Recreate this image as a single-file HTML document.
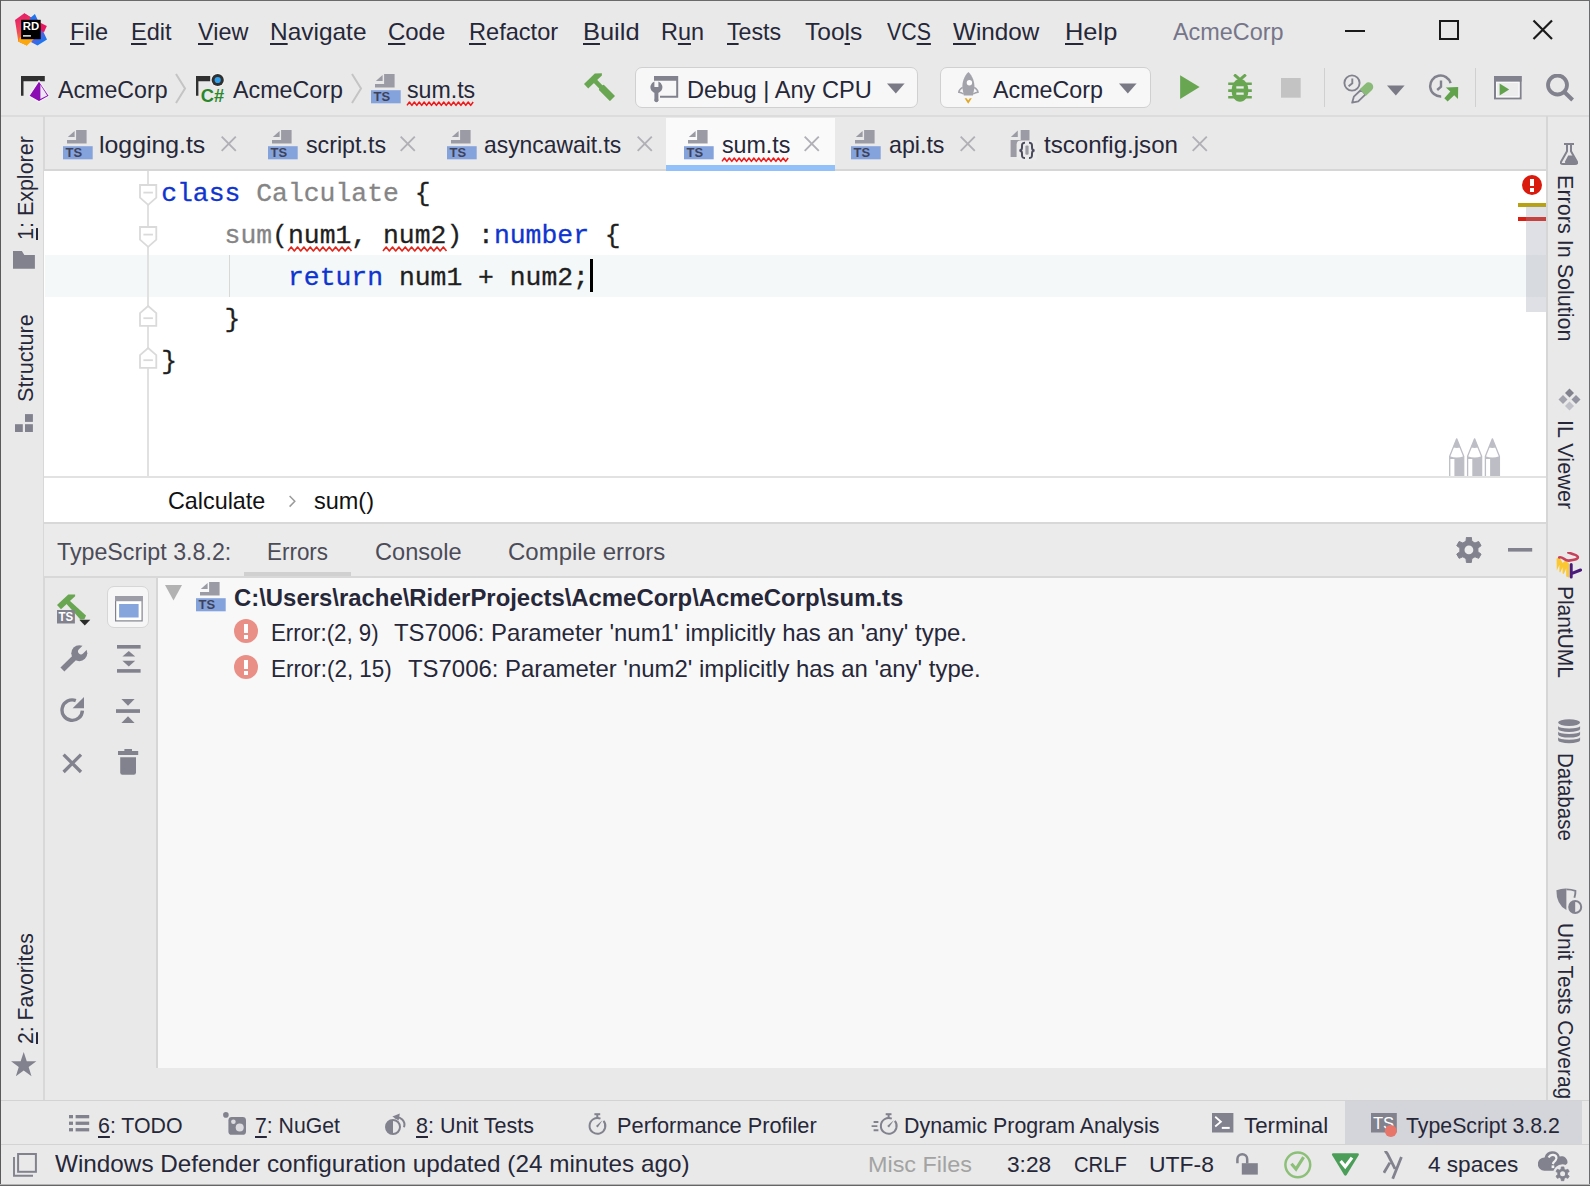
<!DOCTYPE html>
<html lang="en"><head><meta charset="utf-8"><title>AcmeCorp - sum.ts - JetBrains Rider</title>
<style>
html,body{margin:0;padding:0}
body{width:1590px;height:1186px;overflow:hidden;background:#e9e9e9;position:relative;
font-family:"Liberation Sans",sans-serif;font-size:24px;color:#262738}
div,span,svg{position:absolute;display:block}
span{white-space:pre;line-height:31px;transform-origin:0 0}
u{text-decoration:underline;text-decoration-thickness:2px;text-underline-offset:3px;text-decoration-skip-ink:none}
</style></head>
<body>
<div style="left:0px;top:0px;width:1590px;height:1px;background:#6a6a6a;"></div>
<div style="left:0px;top:0px;width:1px;height:1186px;background:#5a5a5a;"></div>
<div style="left:1589px;top:0px;width:1px;height:1186px;background:#6b6b72;"></div>
<div style="left:0px;top:1184px;width:1590px;height:1px;background:#b4b4b4;"></div>
<div style="left:0px;top:1185px;width:1590px;height:1px;background:#666666;"></div>
<div style="left:1px;top:115px;width:1588px;height:2px;background:#dcdcdc;"></div>
<div style="left:43px;top:116px;width:2px;height:984px;background:#d8d8d8;"></div>
<div style="left:1546px;top:116px;width:2px;height:984px;background:#d6d6d6;"></div>
<div style="left:44px;top:169px;width:1502px;height:2px;background:#d6d6d6;"></div>
<div style="left:44px;top:171px;width:1502px;height:305px;background:#ffffff;"></div>
<div style="left:44px;top:476px;width:1502px;height:2px;background:#e2e2e2;"></div>
<div style="left:44px;top:478px;width:1502px;height:44px;background:#ffffff;"></div>
<div style="left:44px;top:522px;width:1502px;height:2px;background:#d8d8d8;"></div>
<div style="left:44px;top:524px;width:1502px;height:52px;background:#ebebeb;"></div>
<div style="left:44px;top:576px;width:1502px;height:2px;background:#d8d8d8;"></div>
<div style="left:45px;top:578px;width:111px;height:490px;background:#e9e9e9;"></div>
<div style="left:156px;top:578px;width:2px;height:490px;background:#d6d6d6;"></div>
<div style="left:158px;top:578px;width:1388px;height:490px;background:#f8f8f8;"></div>
<div style="left:1px;top:1100px;width:1588px;height:1px;background:#d3d3d3;"></div>
<div style="left:1px;top:1144px;width:1588px;height:1px;background:#d3d3d3;"></div>
<span style="left:70.07px;top:15.68px;transform:scaleX(0.9821);"><u>F</u>ile</span>
<span style="left:131.37px;top:15.68px;transform:scaleX(0.9793);"><u>E</u>dit</span>
<span style="left:198.00px;top:15.68px;transform:scaleX(0.9760);"><u>V</u>iew</span>
<span style="left:270.29px;top:15.68px;transform:scaleX(1.0187);"><u>N</u>avigate</span>
<span style="left:388.09px;top:15.68px;transform:scaleX(0.9966);"><u>C</u>ode</span>
<span style="left:469.37px;top:15.68px;transform:scaleX(0.9826);"><u>R</u>efactor</span>
<span style="left:582.51px;top:15.68px;transform:scaleX(1.0591);"><u>B</u>uild</span>
<span style="left:661.18px;top:15.68px;transform:scaleX(0.9753);">R<u>u</u>n</span>
<span style="left:727.48px;top:15.68px;transform:scaleX(0.9669);"><u>T</u>ests</span>
<span style="left:805.45px;top:15.68px;transform:scaleX(1.0216);">Too<u>l</u>s</span>
<span style="left:887.41px;top:15.68px;transform:scaleX(0.8891);">VC<u>S</u></span>
<span style="left:952.99px;top:15.68px;transform:scaleX(1.0104);"><u>W</u>indow</span>
<span style="left:1064.62px;top:15.68px;transform:scaleX(1.0586);"><u>H</u>elp</span>
<span style="left:1172.95px;top:15.68px;color:#76768a;transform:scaleX(0.9758);">AcmeCorp</span>
<div style="left:1345px;top:30px;width:20px;height:2px;background:#1a1a1a;"></div>
<div style="left:1439px;top:20px;width:16px;height:16px;border:2px solid #1a1a1a;background:transparent"></div>
<svg style="left:1531px;top:18px;" width="24" height="24" viewBox="0 0 24 24"><path d="M2.5 2.5 L21 21 M21 2.5 L2.5 21" stroke="#1a1a1a" stroke-width="2.2" fill="none"/></svg>
<span style="left:57.85px;top:73.88px;transform:scaleX(0.9669);">AcmeCorp</span>
<span style="left:232.65px;top:73.88px;transform:scaleX(0.9696);">AcmeCorp</span>
<span class="wavy" style="left:407.16px;top:73.88px;transform:scaleX(0.9647);">sum.ts</span>
<svg style="left:174px;top:72px;" width="14" height="32" viewBox="0 0 14 32"><path d="M2 2 L11 16.5 L2 31" stroke="#c4c4c4" stroke-width="2" fill="none"/></svg>
<svg style="left:349.7px;top:72px;" width="14" height="32" viewBox="0 0 14 32"><path d="M2 2 L11 16.5 L2 31" stroke="#c4c4c4" stroke-width="2" fill="none"/></svg>
<div style="left:635px;top:67px;width:281px;height:39px;border:1px solid #d0d0d0;border-radius:7px;background:#f7f7f7"></div>
<div style="left:940px;top:67px;width:209px;height:39px;border:1px solid #d0d0d0;border-radius:7px;background:#f7f7f7"></div>
<span style="left:687.26px;top:73.88px;transform:scaleX(0.9851);">Debug | Any CPU</span>
<span style="left:992.95px;top:73.88px;transform:scaleX(0.9696);">AcmeCorp</span>
<svg style="left:886.7px;top:83px;" width="18" height="11" viewBox="0 0 18 11"><path d="M0 0.5 H17.6 L8.8 10.5 Z" fill="#7a7a86"/></svg>
<svg style="left:1118.7px;top:83px;" width="18" height="11" viewBox="0 0 18 11"><path d="M0 0.5 H17.6 L8.8 10.5 Z" fill="#7a7a86"/></svg>
<svg style="left:1386.8px;top:85px;" width="18" height="11" viewBox="0 0 18 11"><path d="M0 0.5 H17.6 L8.8 10.5 Z" fill="#7a7a86"/></svg>
<div style="left:1324px;top:68px;width:1px;height:39px;background:#d0d0d0;"></div>
<div style="left:1475px;top:68px;width:1px;height:39px;background:#d0d0d0;"></div>
<div style="left:666px;top:118px;width:169px;height:47px;background:#fafafa;"></div>
<div style="left:666px;top:165px;width:169px;height:6px;background:#92c1f9;"></div>
<span style="left:99.43px;top:129.48px;transform:scaleX(1.0344);">logging.ts</span>
<svg style="left:220.6px;top:136px;" width="16" height="16" viewBox="0 0 16 16"><path d="M0.7 0.7 L14.8 14.8 M14.8 0.7 L0.7 14.8" stroke="#b0b0b6" stroke-width="1.9" fill="none"/></svg>
<span style="left:305.55px;top:129.48px;transform:scaleX(0.9675);">script.ts</span>
<svg style="left:399.7px;top:136px;" width="16" height="16" viewBox="0 0 16 16"><path d="M0.7 0.7 L14.8 14.8 M14.8 0.7 L0.7 14.8" stroke="#b0b0b6" stroke-width="1.9" fill="none"/></svg>
<span style="left:484.33px;top:129.48px;transform:scaleX(0.9524);">asyncawait.ts</span>
<svg style="left:636.8px;top:136px;" width="16" height="16" viewBox="0 0 16 16"><path d="M0.7 0.7 L14.8 14.8 M14.8 0.7 L0.7 14.8" stroke="#b0b0b6" stroke-width="1.9" fill="none"/></svg>
<span class="wavy" style="left:721.65px;top:129.48px;transform:scaleX(0.9676);">sum.ts</span>
<svg style="left:804px;top:136px;" width="16" height="16" viewBox="0 0 16 16"><path d="M0.7 0.7 L14.8 14.8 M14.8 0.7 L0.7 14.8" stroke="#b0b0b6" stroke-width="1.9" fill="none"/></svg>
<span style="left:888.71px;top:129.48px;transform:scaleX(0.9662);">api.ts</span>
<svg style="left:959.6px;top:136px;" width="16" height="16" viewBox="0 0 16 16"><path d="M0.7 0.7 L14.8 14.8 M14.8 0.7 L0.7 14.8" stroke="#b0b0b6" stroke-width="1.9" fill="none"/></svg>
<span style="left:1044.34px;top:129.48px;transform:scaleX(1.0039);">tsconfig.json</span>
<svg style="left:1192.3px;top:136px;" width="16" height="16" viewBox="0 0 16 16"><path d="M0.7 0.7 L14.8 14.8 M14.8 0.7 L0.7 14.8" stroke="#b0b0b6" stroke-width="1.9" fill="none"/></svg>
<div style="left:45px;top:255px;width:1501px;height:42px;background:#f4f8f8;"></div>
<div style="left:147px;top:171px;width:2px;height:305px;background:#e1e1e1;"></div>
<div style="left:228.5px;top:255px;width:1.5px;height:42px;background:#d8d8d8;"></div>
<span style="left:161.20px;top:172.87px;font-size:26.4px;line-height:42px;letter-spacing:0.002px;color:#0f35d0;font-family:'Liberation Mono',monospace;-webkit-text-stroke:0.3px #0f35d0">class</span>
<span style="left:256.27px;top:172.87px;font-size:26.4px;line-height:42px;letter-spacing:0.002px;color:#858585;font-family:'Liberation Mono',monospace;-webkit-text-stroke:0.3px #858585">Calculate</span>
<span style="left:414.72px;top:172.87px;font-size:26.4px;line-height:42px;letter-spacing:0.002px;color:#1f1f1f;font-family:'Liberation Mono',monospace;-webkit-text-stroke:0.3px #1f1f1f">{</span>
<span style="left:224.58px;top:214.87px;font-size:26.4px;line-height:42px;letter-spacing:0.002px;color:#858585;font-family:'Liberation Mono',monospace;-webkit-text-stroke:0.3px #858585">sum</span>
<span style="left:272.12px;top:214.87px;font-size:26.4px;line-height:42px;letter-spacing:0.002px;color:#1f1f1f;font-family:'Liberation Mono',monospace;-webkit-text-stroke:0.3px #1f1f1f">(</span>
<span class="wavy" style="left:287.96px;top:214.87px;font-size:26.4px;line-height:42px;letter-spacing:0.002px;color:#1f1f1f;font-family:'Liberation Mono',monospace;-webkit-text-stroke:0.3px #1f1f1f">num1</span>
<span style="left:351.34px;top:214.87px;font-size:26.4px;line-height:42px;letter-spacing:0.002px;color:#1f1f1f;font-family:'Liberation Mono',monospace;-webkit-text-stroke:0.3px #1f1f1f">, </span>
<span class="wavy" style="left:383.03px;top:214.87px;font-size:26.4px;line-height:42px;letter-spacing:0.002px;color:#1f1f1f;font-family:'Liberation Mono',monospace;-webkit-text-stroke:0.3px #1f1f1f">num2</span>
<span style="left:446.41px;top:214.87px;font-size:26.4px;line-height:42px;letter-spacing:0.002px;color:#1f1f1f;font-family:'Liberation Mono',monospace;-webkit-text-stroke:0.3px #1f1f1f">) :</span>
<span style="left:493.94px;top:214.87px;font-size:26.4px;line-height:42px;letter-spacing:0.002px;color:#0f35d0;font-family:'Liberation Mono',monospace;-webkit-text-stroke:0.3px #0f35d0">number</span>
<span style="left:604.86px;top:214.87px;font-size:26.4px;line-height:42px;letter-spacing:0.002px;color:#1f1f1f;font-family:'Liberation Mono',monospace;-webkit-text-stroke:0.3px #1f1f1f">{</span>
<span style="left:287.96px;top:256.87px;font-size:26.4px;line-height:42px;letter-spacing:0.002px;color:#0f35d0;font-family:'Liberation Mono',monospace;-webkit-text-stroke:0.3px #0f35d0">return</span>
<span style="left:398.88px;top:256.87px;font-size:26.4px;line-height:42px;letter-spacing:0.002px;color:#1f1f1f;font-family:'Liberation Mono',monospace;-webkit-text-stroke:0.3px #1f1f1f">num1 + num2;</span>
<span style="left:224.58px;top:298.87px;font-size:26.4px;line-height:42px;letter-spacing:0.002px;color:#1f1f1f;font-family:'Liberation Mono',monospace;-webkit-text-stroke:0.3px #1f1f1f">}</span>
<span style="left:161.20px;top:340.87px;font-size:26.4px;line-height:42px;letter-spacing:0.002px;color:#1f1f1f;font-family:'Liberation Mono',monospace;-webkit-text-stroke:0.3px #1f1f1f">}</span>
<div style="left:590px;top:259px;width:3px;height:33px;background:#000;"></div>
<div style="left:1518px;top:203px;width:28px;height:4px;background:#b9a212;"></div>
<div style="left:1518px;top:217px;width:28px;height:4px;background:#dc1d12;"></div>
<div style="left:1526px;top:206px;width:20px;height:106px;background:rgba(150,152,170,0.30);"></div>
<div style="left:1522px;top:175px;width:20px;height:20px;border-radius:50%;background:#db1a0e"></div>
<div style="left:1530px;top:179px;width:4px;height:7px;background:#fff;"></div>
<div style="left:1530px;top:188px;width:4px;height:4px;background:#fff;"></div>
<span style="left:167.61px;top:485.18px;color:#111;transform:scaleX(0.9727);">Calculate</span>
<span style="left:313.55px;top:485.18px;color:#111;transform:scaleX(0.9786);">sum()</span>
<svg style="left:287.5px;top:494.5px;" width="10" height="14" viewBox="0 0 10 14"><path d="M1.6 1 L6.8 6.3 L1.6 11.6" stroke="#9a9a9a" stroke-width="1.5" fill="none"/></svg>
<span style="left:56.58px;top:535.58px;color:#4c4c58;transform:scaleX(0.9675);">TypeScript 3.8.2:</span>
<span style="left:266.56px;top:535.58px;color:#4c4c58;transform:scaleX(0.9345);">Errors</span>
<span style="left:374.80px;top:535.58px;color:#4c4c58;transform:scaleX(0.9829);">Console</span>
<span style="left:508.08px;top:535.58px;color:#4c4c58;transform:scaleX(0.9995);">Compile errors</span>
<div style="left:244px;top:572px;width:107px;height:4px;background:#d0d0d0;"></div>
<span style="left:234.32px;top:581.58px;transform:scaleX(0.9956);font-weight:700;">C:\Users\rache\RiderProjects\AcmeCorp\AcmeCorp\sum.ts</span>
<span style="left:270.97px;top:616.78px;transform:scaleX(0.9275);">Error:(2, 9)</span>
<span style="left:393.56px;top:616.78px;transform:scaleX(0.9971);">TS7006: Parameter &#x27;num1&#x27; implicitly has an &#x27;any&#x27; type.</span>
<span style="left:270.96px;top:653.08px;transform:scaleX(0.9332);">Error:(2, 15)</span>
<span style="left:407.66px;top:653.08px;transform:scaleX(0.9966);">TS7006: Parameter &#x27;num2&#x27; implicitly has an &#x27;any&#x27; type.</span>
<svg style="left:165px;top:585px;" width="18" height="16" viewBox="0 0 18 16"><path d="M0 0 H17 L8.5 15.5 Z" fill="#b2b2b2"/></svg>
<div style="left:234px;top:619.3px;width:24px;height:24px;border-radius:50%;background:#e98f86"></div>
<div style="left:244px;top:623.9px;width:4px;height:9.4px;background:#fff;"></div>
<div style="left:244px;top:635.0999999999999px;width:4px;height:3.8px;background:#fff;"></div>
<div style="left:234px;top:655.3px;width:24px;height:24px;border-radius:50%;background:#e98f86"></div>
<div style="left:244px;top:659.9px;width:4px;height:9.4px;background:#fff;"></div>
<div style="left:244px;top:671.0999999999999px;width:4px;height:3.8px;background:#fff;"></div>
<div style="left:107px;top:586px;width:40px;height:40px;border:1px solid #d6d6d6;border-radius:7px;background:#f6f6f6"></div>
<div style="left:1345px;top:1101px;width:237px;height:43px;background:#d4d5da;"></div>
<span style="left:98.02px;top:1110.87px;font-size:22px;line-height:29px;transform:scaleX(0.9701);"><u>6</u>: TODO</span>
<span style="left:255.31px;top:1110.87px;font-size:22px;line-height:29px;transform:scaleX(0.9648);"><u>7</u>: NuGet</span>
<span style="left:416.17px;top:1110.87px;font-size:22px;line-height:29px;transform:scaleX(0.9773);"><u>8</u>: Unit Tests</span>
<span style="left:617.11px;top:1110.87px;font-size:22px;line-height:29px;transform:scaleX(0.9896);">Performance Profiler</span>
<span style="left:903.95px;top:1110.87px;font-size:22px;line-height:29px;transform:scaleX(0.9717);">Dynamic Program Analysis</span>
<span style="left:1244.20px;top:1110.87px;font-size:22px;line-height:29px;transform:scaleX(1.0115);">Terminal</span>
<span style="left:1405.52px;top:1110.87px;font-size:22px;line-height:29px;transform:scaleX(0.9678);">TypeScript 3.8.2</span>
<span style="left:55.49px;top:1148.38px;transform:scaleX(1.0121);">Windows Defender configuration updated (24 minutes ago)</span>
<span style="left:868.08px;top:1150.07px;font-size:22px;line-height:29px;color:#a3a3a3;transform:scaleX(1.0622);">Misc Files</span>
<span style="left:1006.74px;top:1150.07px;font-size:22px;line-height:29px;transform:scaleX(1.0311);">3:28</span>
<span style="left:1073.77px;top:1150.07px;font-size:22px;line-height:29px;transform:scaleX(0.9197);">CRLF</span>
<span style="left:1149.03px;top:1150.07px;font-size:22px;line-height:29px;transform:scaleX(1.0424);">UTF-8</span>
<span style="left:1428.18px;top:1150.07px;font-size:22px;line-height:29px;transform:scaleX(1.0259);">4 spaces</span>
<span style="left:11.47px;top:239.94px;font-size:22px;line-height:29px;transform:rotate(-90deg) scaleX(0.9757)"><u>1</u>: Explorer</span>
<span style="left:11.47px;top:402.38px;font-size:22px;line-height:29px;transform:rotate(-90deg) scaleX(0.9830)">Structure</span>
<span style="left:11.47px;top:1043.77px;font-size:22px;line-height:29px;transform:rotate(-90deg) scaleX(0.9644)"><u>2</u>: Favorites</span>
<span style="left:1580.33px;top:175.23px;font-size:22px;line-height:29px;transform:rotate(90deg) scaleX(0.9800)">Errors In Solution</span>
<span style="left:1580.33px;top:419.80px;font-size:22px;line-height:29px;transform:rotate(90deg) scaleX(0.9853)">IL Viewer</span>
<span style="left:1580.33px;top:586.28px;font-size:22px;line-height:29px;transform:rotate(90deg) scaleX(0.9515)">PlantUML</span>
<span style="left:1580.33px;top:753.02px;font-size:22px;line-height:29px;transform:rotate(90deg) scaleX(0.9333)">Database</span>
<div style="left:1548px;top:900px;width:41px;height:200px;overflow:hidden"><span style="left:32.33px;top:22.69px;font-size:22px;line-height:29px;transform:rotate(90deg) scaleX(0.9497)">Unit Tests Coverage</span></div>
<svg style="left:14px;top:13.4px;" width="34" height="33" viewBox="0 0 34 33"><defs><linearGradient id="lg1" x1="0" y1="0" x2="0.35" y2="1"><stop offset="0" stop-color="#e3116c"/><stop offset="0.55" stop-color="#f0465a"/><stop offset="1" stop-color="#fca80c"/></linearGradient><linearGradient id="lg2" x1="0.2" y1="0" x2="0.6" y2="1"><stop offset="0" stop-color="#0a7cf8"/><stop offset="0.5" stop-color="#8a4ac8"/><stop offset="1" stop-color="#0a7cf8"/></linearGradient></defs><path d="M1 6.9 L10.3 0.3 L17.2 4.6 L12.9 32.6 L4.3 28.6 Z" fill="url(#lg1)"/><path d="M10.3 0.3 L17.2 4.6 L21 17 L16 27 L12.9 32.6 L4.3 28.6 Z" fill="url(#lg1)"/><path d="M16.2 5 L20.9 1 L33 26.5 L23.5 32.6 L17.4 29.2 Z" fill="url(#lg2)"/><path d="M26.4 9.8 L32.8 12.9 L30 19.2 L26.4 17 Z" fill="#e8155f"/><path d="M12.9 32.6 L4.3 28.6 L6 24 L20 26 Z" fill="#fca80c"/><rect x="7.1" y="6.8" width="19.6" height="19.4" fill="#000"/><text x="8.8" y="17.4" font-family="Liberation Sans,sans-serif" font-weight="700" font-size="11.6" fill="#fff" textLength="16.4" lengthAdjust="spacingAndGlyphs">RD</text><rect x="9" y="22.2" width="7.9" height="1.4" fill="#fff"/></svg>
<svg style="left:20.9px;top:75.7px;" width="30" height="27" viewBox="0 0 30 27"><path d="M0 0 H23.8 V5.2 H2.5 V19.8 H0 Z" fill="#303030"/><path d="M18 4.6 L28.3 20 L18 25.8 L7.9 20 Z" fill="#8d0db4" stroke="#f4f4f4" stroke-width="1.2" stroke-linejoin="round"/><path d="M19.4 8.8 L26.2 19.4 L19.4 23 Z" fill="#efe6f4"/></svg>
<svg style="left:196.4px;top:75.6px;overflow:visible" width="30" height="28" viewBox="0 0 30 28"><path d="M0 0 H14.2 V5.2 H2.4 V19.8 H0 Z" fill="#303030"/><circle cx="21.7" cy="4" r="7" fill="#f2f2f2"/><circle cx="21.7" cy="4" r="6.1" fill="#303030"/><circle cx="21.7" cy="4" r="3.1" fill="#2da0ee"/><text x="4.8" y="26" font-family="Liberation Sans,sans-serif" font-weight="700" font-size="17.5" fill="#2a872a" textLength="23.4" lengthAdjust="spacingAndGlyphs">C#</text></svg>
<svg style="left:584.4px;top:73.4px;" width="31" height="28" viewBox="0 0 31 28"><path d="M0 11 L10.8 0.6 L17.9 0.3 L17.9 2.4 L4.2 15.4 Z" fill="#69a652"/><path d="M9.6 9.8 L12.8 6.6 L18.4 12.2 L19.8 11.7 L31 23 L25.9 28.1 L14.9 17 L15.2 15.4 Z" fill="#69a652"/></svg>
<svg style="left:649.9px;top:75.8px;" width="29" height="27" viewBox="0 0 29 27"><path d="M4 0 H28.2 V21.8 H10 V19.8 H26.2 V4.8 H4 Z" fill="#82828f"/><path d="M4.4 5.6 A6 6 0 1 0 8.4 5.6 V11 H4.4 Z" fill="#82828f"/><rect x="4.4" y="12" width="4" height="12.4" fill="#82828f"/><circle cx="6.4" cy="24.2" r="2" fill="#82828f"/></svg>
<svg style="left:958.3px;top:71.6px;" width="21" height="32" viewBox="0 0 21 32"><path d="M10.4 0 C14.5 4 16.8 10 16.4 16 L15 23.6 H5.8 L4.4 16 C4 10 6.3 4 10.4 0 Z" fill="#a3a3ab"/><circle cx="11.4" cy="10.8" r="2.7" fill="#fdfdfd"/><path d="M4.6 15.4 C2.4 16.8 0.8 18.6 0.8 20.2 C2.4 20.2 4.2 21 5.6 22" fill="none" stroke="#a3a3ab" stroke-width="1.5"/><path d="M16.2 15.4 C18.4 16.8 20 18.6 20 20.2 C18.4 20.2 16.6 21 15.2 22" fill="none" stroke="#a3a3ab" stroke-width="1.5"/><path d="M6.6 26.2 H8.6 L10.2 28.6 L11.8 26.2 H13.8 L10.2 31.8 Z" fill="#e0a82a"/></svg>
<svg style="left:1179.6px;top:75.4px;" width="20" height="25" viewBox="0 0 20 25"><path d="M0.1 0.2 L19.6 12.1 L0.1 24 Z" fill="#69a652"/></svg>
<svg style="left:1227.5px;top:73.8px;" width="24" height="28" viewBox="0 0 24 28"><path d="M6.2 0.6 L12 5.6 M17.8 0.6 L12 5.6" stroke="#69a652" stroke-width="3" fill="none"/><ellipse cx="12" cy="16.4" rx="8.5" ry="11.3" fill="#69a652"/><path d="M0.2 9.8 H23.8 M0.2 16.6 H23.8 M0.2 23.2 H23.8" stroke="#69a652" stroke-width="2.6"/><rect x="8.3" y="12.3" width="7.4" height="2.3" fill="#ececec"/><rect x="8.3" y="18.5" width="7.4" height="2.3" fill="#ececec"/></svg>
<svg style="left:1281.4px;top:77.7px;" width="20" height="20" viewBox="0 0 20 20"><rect width="19.7" height="19.7" fill="#c3c3c3"/></svg>
<svg style="left:1343px;top:73.6px;" width="32" height="31" viewBox="0 0 32 31"><circle cx="9" cy="9" r="7.6" fill="none" stroke="#82828f" stroke-width="1.9"/><path d="M9.3 4.6 V9.2 L5.6 12.2" fill="none" stroke="#82828f" stroke-width="1.9"/><g transform="translate(8.7,29.1) rotate(-43.6)"><path d="M0.6 0 L6 -3.2 H16 V3.2 H6 Z" fill="none" stroke="#82828f" stroke-width="1.8" stroke-linejoin="round"/><path d="M15.4 -4.6 H23.4 A4.6 4.6 0 0 1 23.4 4.6 H15.4 Z" fill="#8aba78"/></g></svg>
<svg style="left:1428.4px;top:74px;" width="32" height="28" viewBox="0 0 32 28"><path d="M22.6 9.2 A10.4 10.4 0 1 0 13.2 22.4" fill="none" stroke="#82828f" stroke-width="2.5"/><path d="M13 6.6 V12.6 L9.2 16" fill="none" stroke="#82828f" stroke-width="2.4"/><path d="M17.8 13.4 L30.2 12.9 L30 24.9 L26.2 21.2 L19.6 27.4 L16.3 24.2 L22.3 17.6 Z" fill="#62a24c"/></svg>
<svg style="left:1494.4px;top:76px;" width="28" height="24" viewBox="0 0 28 24"><rect x="1" y="1" width="25.6" height="21.4" fill="#ededed" stroke="#82828f" stroke-width="2"/><rect x="2.6" y="6.4" width="22.4" height="14.4" fill="none" stroke="#fafafa" stroke-width="1.2"/><rect x="0" y="0" width="27.6" height="5.6" fill="#82828f"/><path d="M5.6 7.6 L15.2 13.5 L5.6 19.6 Z" fill="#62a24c"/></svg>
<svg style="left:1546px;top:74px;" width="29" height="28" viewBox="0 0 29 28"><circle cx="11.5" cy="11" r="9.5" fill="none" stroke="#82828f" stroke-width="3.8"/><path d="M18.6 18.2 L26.6 26" stroke="#82828f" stroke-width="4" fill="none"/></svg>
<svg style="left:371.3px;top:73.8px;" width="30" height="30" viewBox="0 0 30 30"><path d="M13.1 0.1 H23.6 V13.6 H4 V9.9 H13.1 Z" fill="#9b9ba6"/><path d="M4.8 6.9 H11.6 V0.9 Z" fill="#9b9ba6"/><rect x="0" y="16.2" width="29.7" height="13.1" fill="#84a3dd"/><text x="2.6" y="27.3" font-family="Liberation Sans,sans-serif" font-weight="700" font-size="12.6" fill="#3e425a" textLength="16.6" lengthAdjust="spacingAndGlyphs">TS</text></svg>
<svg style="left:62.6px;top:129.6px;" width="30" height="30" viewBox="0 0 30 30"><path d="M13.1 0.1 H23.6 V13.6 H4 V9.9 H13.1 Z" fill="#9b9ba6"/><path d="M4.8 6.9 H11.6 V0.9 Z" fill="#9b9ba6"/><rect x="0" y="16.2" width="29.7" height="13.1" fill="#84a3dd"/><text x="2.6" y="27.3" font-family="Liberation Sans,sans-serif" font-weight="700" font-size="12.6" fill="#3e425a" textLength="16.6" lengthAdjust="spacingAndGlyphs">TS</text></svg>
<svg style="left:267.9px;top:129.6px;" width="30" height="30" viewBox="0 0 30 30"><path d="M13.1 0.1 H23.6 V13.6 H4 V9.9 H13.1 Z" fill="#9b9ba6"/><path d="M4.8 6.9 H11.6 V0.9 Z" fill="#9b9ba6"/><rect x="0" y="16.2" width="29.7" height="13.1" fill="#84a3dd"/><text x="2.6" y="27.3" font-family="Liberation Sans,sans-serif" font-weight="700" font-size="12.6" fill="#3e425a" textLength="16.6" lengthAdjust="spacingAndGlyphs">TS</text></svg>
<svg style="left:446.9px;top:129.6px;" width="30" height="30" viewBox="0 0 30 30"><path d="M13.1 0.1 H23.6 V13.6 H4 V9.9 H13.1 Z" fill="#9b9ba6"/><path d="M4.8 6.9 H11.6 V0.9 Z" fill="#9b9ba6"/><rect x="0" y="16.2" width="29.7" height="13.1" fill="#84a3dd"/><text x="2.6" y="27.3" font-family="Liberation Sans,sans-serif" font-weight="700" font-size="12.6" fill="#3e425a" textLength="16.6" lengthAdjust="spacingAndGlyphs">TS</text></svg>
<svg style="left:684px;top:129.6px;" width="30" height="30" viewBox="0 0 30 30"><path d="M13.1 0.1 H23.6 V13.6 H4 V9.9 H13.1 Z" fill="#9b9ba6"/><path d="M4.8 6.9 H11.6 V0.9 Z" fill="#9b9ba6"/><rect x="0" y="16.2" width="29.7" height="13.1" fill="#84a3dd"/><text x="2.6" y="27.3" font-family="Liberation Sans,sans-serif" font-weight="700" font-size="12.6" fill="#3e425a" textLength="16.6" lengthAdjust="spacingAndGlyphs">TS</text></svg>
<svg style="left:851px;top:129.6px;" width="30" height="30" viewBox="0 0 30 30"><path d="M13.1 0.1 H23.6 V13.6 H4 V9.9 H13.1 Z" fill="#9b9ba6"/><path d="M4.8 6.9 H11.6 V0.9 Z" fill="#9b9ba6"/><rect x="0" y="16.2" width="29.7" height="13.1" fill="#84a3dd"/><text x="2.6" y="27.3" font-family="Liberation Sans,sans-serif" font-weight="700" font-size="12.6" fill="#3e425a" textLength="16.6" lengthAdjust="spacingAndGlyphs">TS</text></svg>
<svg style="left:196.2px;top:582.2px;" width="30" height="30" viewBox="0 0 30 30"><path d="M13.1 0.1 H23.6 V13.6 H4 V9.9 H13.1 Z" fill="#9b9ba6"/><path d="M4.8 6.9 H11.6 V0.9 Z" fill="#9b9ba6"/><rect x="0" y="16.2" width="29.7" height="13.1" fill="#84a3dd"/><text x="2.6" y="27.3" font-family="Liberation Sans,sans-serif" font-weight="700" font-size="12.6" fill="#3e425a" textLength="16.6" lengthAdjust="spacingAndGlyphs">TS</text></svg>
<svg style="left:1010.4px;top:129.6px;" width="28" height="31" viewBox="0 0 28 31"><path d="M10.7 0 H19.5 V27 H0.6 V10 H10.7 Z" fill="#9b9ba6"/><path d="M0.9 6.9 H7.8 V0.6 Z" fill="#9b9ba6"/><rect x="6.6" y="10.6" width="20.6" height="20" rx="4" fill="#ececec"/><rect x="15.4" y="15.4" width="3.2" height="9.4" rx="1.2" fill="#9b9ba6"/><path d="M15 12.8 C11.6 12.6 12 15.2 12 17.4 C12 19.4 11.4 20.3 9.4 20.4 C11.4 20.5 12 21.4 12 23.4 C12 25.6 11.6 28.2 15 28" fill="none" stroke="#4a4c5e" stroke-width="2"/><path d="M19 12.8 C22.4 12.6 22 15.2 22 17.4 C22 19.4 22.6 20.3 24.6 20.4 C22.6 20.5 22 21.4 22 23.4 C22 25.6 22.4 28.2 19 28" fill="none" stroke="#4a4c5e" stroke-width="2"/></svg>
<svg style="left:139.2px;top:184.2px;" width="19" height="23" viewBox="0 0 19 23"><path d="M1 1 H17.3 V13.6 L9.15 20.8 L1 13.6 Z" fill="#fff" stroke="#dadada" stroke-width="1.8"/><path d="M4.4 8.6 H13.9" stroke="#dadada" stroke-width="1.8"/></svg>
<svg style="left:139.2px;top:226.2px;" width="19" height="23" viewBox="0 0 19 23"><path d="M1 1 H17.3 V13.6 L9.15 20.8 L1 13.6 Z" fill="#fff" stroke="#dadada" stroke-width="1.8"/><path d="M4.4 8.6 H13.9" stroke="#dadada" stroke-width="1.8"/></svg>
<svg style="left:139.2px;top:305.3px;" width="19" height="23" viewBox="0 0 19 23"><path d="M1 20.8 H17.3 V8.2 L9.15 1 L1 8.2 Z" fill="#fff" stroke="#dadada" stroke-width="1.8"/><path d="M4.4 13.2 H13.9" stroke="#dadada" stroke-width="1.8"/></svg>
<svg style="left:139.2px;top:347px;" width="19" height="23" viewBox="0 0 19 23"><path d="M1 20.8 H17.3 V8.2 L9.15 1 L1 8.2 Z" fill="#fff" stroke="#dadada" stroke-width="1.8"/><path d="M4.4 13.2 H13.9" stroke="#dadada" stroke-width="1.8"/></svg>
<svg style="left:1448.6px;top:437.6px;" width="53" height="38.4" viewBox="0 0 53 38.4"><g transform="translate(0,0)"><path d="M0.7 38.2 V18.2 L7.7 0.8 L14.7 18.2 V38.2" fill="#fff" stroke="#bdbdc5" stroke-width="1.3" stroke-linejoin="round"/><path d="M7.7 0.8 L11.4 9.6 Q7.7 10.6 4 9.6 Z" fill="#bdbdc5"/><path d="M0.7 18.2 Q7.7 20.6 14.7 18.2 V21 H0.7 Z" fill="#bdbdc5"/><rect x="5.4" y="20" width="9.3" height="18.2" fill="#bdbdc5"/></g><g transform="translate(17.9,0)"><path d="M0.7 38.2 V18.2 L7.7 0.8 L14.7 18.2 V38.2" fill="#fff" stroke="#bdbdc5" stroke-width="1.3" stroke-linejoin="round"/><path d="M7.7 0.8 L11.4 9.6 Q7.7 10.6 4 9.6 Z" fill="#bdbdc5"/><path d="M0.7 18.2 Q7.7 20.6 14.7 18.2 V21 H0.7 Z" fill="#bdbdc5"/><rect x="5.4" y="20" width="9.3" height="18.2" fill="#bdbdc5"/></g><g transform="translate(35.7,0)"><path d="M0.7 38.2 V18.2 L7.7 0.8 L14.7 18.2 V38.2" fill="#fff" stroke="#bdbdc5" stroke-width="1.3" stroke-linejoin="round"/><path d="M7.7 0.8 L11.4 9.6 Q7.7 10.6 4 9.6 Z" fill="#bdbdc5"/><path d="M0.7 18.2 Q7.7 20.6 14.7 18.2 V21 H0.7 Z" fill="#bdbdc5"/><rect x="5.4" y="20" width="9.3" height="18.2" fill="#bdbdc5"/></g></svg>
<svg style="left:287.6px;top:246.2px;overflow:visible" width="65" height="7" viewBox="0 0 65 7"><path d="M0.00 5.00 L3.18 1.00 L6.35 5.00 L9.53 1.00 L12.70 5.00 L15.88 1.00 L19.05 5.00 L22.23 1.00 L25.40 5.00 L28.58 1.00 L31.75 5.00 L34.93 1.00 L38.10 5.00 L41.28 1.00 L44.45 5.00 L47.63 1.00 L50.80 5.00 L53.98 1.00 L57.15 5.00 L60.33 1.00 L63.50 5.00" fill="none" stroke="#e5241a" stroke-width="1.6" stroke-linejoin="round"/></svg>
<svg style="left:383.2px;top:246.2px;overflow:visible" width="65" height="7" viewBox="0 0 65 7"><path d="M0.00 5.00 L3.18 1.00 L6.35 5.00 L9.53 1.00 L12.70 5.00 L15.88 1.00 L19.05 5.00 L22.23 1.00 L25.40 5.00 L28.58 1.00 L31.75 5.00 L34.93 1.00 L38.10 5.00 L41.28 1.00 L44.45 5.00 L47.63 1.00 L50.80 5.00 L53.98 1.00 L57.15 5.00 L60.33 1.00 L63.50 5.00" fill="none" stroke="#e5241a" stroke-width="1.6" stroke-linejoin="round"/></svg>
<svg style="left:407.4px;top:101.2px;overflow:visible" width="69" height="6" viewBox="0 0 69 6"><path d="M0.00 4.40 L2.45 1.00 L4.90 4.40 L7.35 1.00 L9.80 4.40 L12.25 1.00 L14.70 4.40 L17.15 1.00 L19.60 4.40 L22.05 1.00 L24.50 4.40 L26.95 1.00 L29.40 4.40 L31.85 1.00 L34.30 4.40 L36.75 1.00 L39.20 4.40 L41.65 1.00 L44.10 4.40 L46.55 1.00 L49.00 4.40 L51.45 1.00 L53.90 4.40 L56.35 1.00 L58.80 4.40 L61.25 1.00 L63.70 4.40 L66.15 1.00" fill="none" stroke="#f01818" stroke-width="1.5" stroke-linejoin="round"/></svg>
<svg style="left:721.8px;top:157px;overflow:visible" width="69" height="6" viewBox="0 0 69 6"><path d="M0.00 4.40 L2.45 1.00 L4.90 4.40 L7.35 1.00 L9.80 4.40 L12.25 1.00 L14.70 4.40 L17.15 1.00 L19.60 4.40 L22.05 1.00 L24.50 4.40 L26.95 1.00 L29.40 4.40 L31.85 1.00 L34.30 4.40 L36.75 1.00 L39.20 4.40 L41.65 1.00 L44.10 4.40 L46.55 1.00 L49.00 4.40 L51.45 1.00 L53.90 4.40 L56.35 1.00 L58.80 4.40 L61.25 1.00 L63.70 4.40 L66.15 1.00" fill="none" stroke="#f01818" stroke-width="1.5" stroke-linejoin="round"/></svg>
<svg style="left:13px;top:251px;" width="22" height="18" viewBox="0 0 22 18"><path d="M0 0 H8.9 L11.3 4 H21.9 V17.8 H0 Z" fill="#82828f"/></svg>
<svg style="left:15px;top:414px;" width="18" height="18" viewBox="0 0 18 18"><rect x="10" y="0.1" width="7.9" height="7.8" fill="#82828f"/><rect x="0" y="10.2" width="7.8" height="7.8" fill="#82828f"/><rect x="10" y="10.2" width="7.9" height="7.8" fill="#82828f"/></svg>
<svg style="left:11.1px;top:1051.8px;" width="26" height="26" viewBox="0 0 26 26"><polygon points="12.70,0.10 15.76,9.19 25.35,9.29 17.65,15.01 20.52,24.16 12.70,18.60 4.88,24.16 7.75,15.01 0.05,9.29 9.64,9.19" fill="#82828f"/></svg>
<svg style="left:1560.2px;top:143.2px;" width="18" height="22.5" viewBox="0 0 18 22.5"><path d="M4 1 H14 M7 1 V8.2 L1.2 18.4 Q0 21 3 21 H15 Q18 21 16.8 18.4 L11 8.2 V1" fill="none" stroke="#82828f" stroke-width="2" stroke-linejoin="round"/><path d="M8.2 12.4 H12.8 L16.4 19 Q16.8 20.4 15 20.4 H6.4 Q4.4 20.4 5 18.6 Z" fill="#82828f"/></svg>
<svg style="left:1557.5px;top:388px;" width="24" height="24" viewBox="0 0 24 24"><path d="M11.5 0.40000000000000036 L16.0 4.9 L11.5 9.4 L7.0 4.9 Z" fill="#82828f"/><path d="M5 6.9 L9.5 11.4 L5 15.9 L0.5 11.4 Z" fill="#a3a3ad"/><path d="M18 6.9 L22.5 11.4 L18 15.9 L13.5 11.4 Z" fill="#9292a0"/><path d="M11.5 13.399999999999999 L16.0 17.9 L11.5 22.4 L7.0 17.9 Z" fill="#c0c0c8"/></svg>
<svg style="left:1556px;top:551.6px;" width="26" height="27" viewBox="0 0 26 27"><path d="M0.6 6.4 L3.6 5.4 L6.6 11 L9.4 8.6 L13 11.4 V25.6 L10.2 24.6 V16.6 L7.8 22 L6.6 21.4 V15.2 L4.2 20.4 L3.4 20 V13 L0.8 18.6 Z" fill="#fcc832"/><path d="M3.2 5.4 C6.6 4.2 9 9 12.8 8.6 C17 8.2 22.4 7.6 21.8 4.8 C21.4 3 15.4 1.6 12.4 0.6" fill="none" stroke="#c8415b" stroke-width="2.6" stroke-linecap="round"/><path d="M15.2 12.4 V25 M15.4 21.6 L24.6 18" fill="none" stroke="#4b1b7c" stroke-width="3" stroke-linecap="round"/></svg>
<svg style="left:1557.9px;top:719.1px;" width="23" height="26" viewBox="0 0 23 26"><ellipse cx="11.1" cy="3.6" rx="11" ry="3.3" fill="#82828f"/><path d="M0.1 7 A11 2.5 0 0 0 22.1 7 V10 A11 3 0 0 1 0.1 10 Z" fill="#82828f"/><path d="M0.1 12.6 A11 2.5 0 0 0 22.1 12.6 V15.6 A11 3 0 0 1 0.1 15.6 Z" fill="#82828f"/><path d="M0.1 18.2 A11 2.5 0 0 0 22.1 18.2 V21.2 A11 3 0 0 1 0.1 21.2 Z" fill="#82828f"/></svg>
<svg style="left:1555.8px;top:887.8px;" width="28" height="28" viewBox="0 0 28 28"><path d="M0.4 2.2 Q5.6 0.4 10.4 0.6 V22 Q0.2 16.4 0.4 2.2 Z" fill="#82828f"/><path d="M10.4 1.4 Q15.4 1.4 19.4 2.9 Q19.6 6.2 18.4 9.8" fill="none" stroke="#82828f" stroke-width="1.9"/><circle cx="19.2" cy="19" r="7.6" fill="#e9e9e9"/><circle cx="19.2" cy="19" r="6" fill="none" stroke="#82828f" stroke-width="2"/><path d="M19.2 13 A6 6 0 0 0 19.2 25 Z" fill="#82828f"/></svg>
<svg style="left:1455.5px;top:536.7px;" width="26" height="26" viewBox="0 0 26 26"><path d="M9.97 4.18 L10.48 0.23 L15.32 0.23 L15.83 4.18 L18.98 6.00 L22.67 4.47 L25.08 8.66 L21.92 11.08 L21.92 14.72 L25.08 17.14 L22.67 21.33 L18.98 19.80 L15.83 21.62 L15.32 25.57 L10.48 25.57 L9.97 21.62 L6.82 19.80 L3.13 21.33 L0.72 17.14 L3.88 14.72 L3.88 11.08 L0.72 8.66 L3.13 4.47 L6.82 6.00 Z" fill="#82828f" stroke="#82828f" stroke-width="1" stroke-linejoin="round"/><circle cx="12.9" cy="12.9" r="4.4" fill="#ebebeb"/></svg>
<svg style="left:1508px;top:547.8px;" width="25" height="4" viewBox="0 0 25 4"><rect width="24.2" height="3.6" fill="#82828f"/></svg>
<svg style="left:56.9px;top:593.5px;" width="34" height="32" viewBox="0 0 34 32"><path d="M0 11 L11.3 0.4 L18.1 0.4 L18.1 2.2 L4 15.2 Z" fill="#69a652"/><path d="M8.2 8.6 L11.4 5.4 L29 21.4 L27.4 25.2 L23.4 25.4 Z" fill="#69a652"/><rect x="0" y="16" width="17.9" height="13.5" fill="#82828f"/><text x="1.6" y="27.2" font-family="Liberation Sans,sans-serif" font-weight="700" font-size="12.4" fill="#fff" textLength="14.6" lengthAdjust="spacingAndGlyphs">TS</text><path d="M22.3 25.7 H33.3 L27.8 31.6 Z" fill="#2b2b2b"/></svg>
<svg style="left:114.6px;top:595.6px;" width="28" height="26" viewBox="0 0 28 26"><rect x="0.6" y="0.6" width="26.5" height="24.3" fill="#fff" stroke="#82828f" stroke-width="1.2"/><rect x="0" y="0" width="27.7" height="5.2" fill="#9d9da8"/><rect x="4.1" y="8" width="19.5" height="13.5" fill="#86a5dd"/></svg>
<svg style="left:59.6px;top:645.3px;" width="28" height="28" viewBox="0 0 28 28"><path d="M2.4 24.4 L16 11.2" stroke="#82828f" stroke-width="5.6" fill="none"/><circle cx="19.3" cy="8.2" r="8" fill="#82828f"/><path d="M21 6.4 L29 -1.6" stroke="#e9e9e9" stroke-width="5.8" stroke-linecap="round" fill="none"/></svg>
<svg style="left:116.7px;top:645.3px;" width="24" height="28" viewBox="0 0 24 28"><rect x="0" y="0" width="23.6" height="3.6" fill="#82828f"/><rect x="0" y="24.1" width="23.6" height="3.6" fill="#82828f"/><path d="M11.8 5.9 L18.2 11.6 H5.4 Z" fill="#82828f"/><path d="M5.4 15.8 H18.2 L11.8 21.5 Z" fill="#82828f"/></svg>
<svg style="left:60.2px;top:697.4px;" width="25" height="26" viewBox="0 0 25 26"><path d="M22.4 13.6 A10.2 10.2 0 1 1 15.8 3.6" fill="none" stroke="#82828f" stroke-width="3.4"/><path d="M24 0 V11.2 H12.6 Z" fill="#82828f"/></svg>
<svg style="left:116.4px;top:699px;" width="24" height="24" viewBox="0 0 24 24"><rect x="0" y="10.2" width="24" height="3.7" fill="#82828f"/><path d="M5.4 0 H18.6 L12 6.8 Z" fill="#82828f"/><path d="M12 17.2 L18.6 24 H5.4 Z" fill="#82828f"/></svg>
<svg style="left:62.4px;top:752.8px;" width="21" height="21" viewBox="0 0 21 21"><path d="M1.6 1.6 L19 19 M19 1.6 L1.6 19" stroke="#82828f" stroke-width="3.3" fill="none"/></svg>
<svg style="left:118.2px;top:748.9px;" width="21" height="26" viewBox="0 0 21 26"><rect x="6.4" y="0" width="7.6" height="3" fill="#82828f"/><rect x="0" y="2" width="20.2" height="4" fill="#82828f"/><path d="M2.2 8.2 H18 V23.4 Q18 25.7 15.8 25.7 H4.4 Q2.2 25.7 2.2 23.4 Z" fill="#82828f"/></svg>
<svg style="left:68.5px;top:1115.2px;" width="21" height="17" viewBox="0 0 21 17"><rect x="0" y="0" width="4" height="3.3" fill="#82828f"/><rect x="6.6" y="0" width="13.6" height="3.3" fill="#82828f"/><rect x="0" y="6.6" width="4" height="3.3" fill="#82828f"/><rect x="6.6" y="6.6" width="13.6" height="3.3" fill="#82828f"/><rect x="0" y="13.1" width="4" height="3.3" fill="#82828f"/><rect x="6.6" y="13.1" width="13.6" height="3.3" fill="#82828f"/></svg>
<svg style="left:222.9px;top:1112.3px;" width="24" height="23" viewBox="0 0 24 23"><circle cx="2.9" cy="2.9" r="2.8" fill="#82828f"/><rect x="5.4" y="5" width="17.6" height="17.8" rx="3.4" fill="#82828f"/><circle cx="10.4" cy="9.8" r="2.3" fill="#dcdce0"/><circle cx="16.7" cy="15.4" r="4" fill="#dcdce0"/></svg>
<svg style="left:385.1px;top:1113px;" width="23" height="23" viewBox="0 0 23 23"><path d="M9.6 4.8 A7.4 7.4 0 0 1 19 14.2" fill="none" stroke="#82828f" stroke-width="2"/><path d="M7.4 3.6 L14.8 0.6 L13.6 7.4 Z" fill="#82828f"/><circle cx="8" cy="14" r="7" fill="#e9e9e9" stroke="#82828f" stroke-width="2"/><path d="M8 7 A7 7 0 0 0 8 21 Z" fill="#82828f"/></svg>
<svg style="left:587px;top:1112px;" width="24" height="24" viewBox="0 0 24 24"><path d="M16.5 8.8 A7.9 7.9 0 1 1 13.5 6.6000000000000005" fill="none" stroke="#82828f" stroke-width="2"/><rect x="7.4" y="1.200000000000001" width="5.8" height="2" fill="#82828f"/><rect x="9.3" y="2.8000000000000007" width="2" height="3.4" fill="#82828f"/><path d="M8.9 14.0 L10.700000000000001 15.4 L15.5 8.200000000000001 Z" fill="#82828f"/></svg>
<svg style="left:870.5px;top:1112px;" width="28" height="24" viewBox="0 0 28 24"><path d="M23.8 8.8 A7.9 7.9 0 1 1 20.8 6.6000000000000005" fill="none" stroke="#82828f" stroke-width="2"/><rect x="14.700000000000001" y="1.200000000000001" width="5.8" height="2" fill="#82828f"/><rect x="16.6" y="2.8000000000000007" width="2" height="3.4" fill="#82828f"/><path d="M16.200000000000003 14.0 L18.0 15.4 L22.8 8.200000000000001 Z" fill="#82828f"/><path d="M2.6 10 H7.4 M0.6 14.1 H6.4 M2.6 18.2 H7.4" stroke="#82828f" stroke-width="1.9" fill="none"/></svg>
<svg style="left:1211.9px;top:1113.2px;" width="22" height="20" viewBox="0 0 22 20"><rect width="21.4" height="19.5" fill="#82828f"/><path d="M3.2 3.8 L8.9 8.7 L3.2 13.5" fill="none" stroke="#fff" stroke-width="1.8"/><path d="M9.8 14.9 H17.7" stroke="#fff" stroke-width="2"/></svg>
<svg style="left:1371.1px;top:1113.2px;" width="27" height="25" viewBox="0 0 27 25"><rect width="25.8" height="19.5" fill="#82828f"/><text x="1.9" y="16.1" font-family="Liberation Sans,sans-serif" font-size="16.6" fill="#fff" textLength="21.2" lengthAdjust="spacingAndGlyphs">TS</text><circle cx="19.8" cy="17.9" r="6" fill="#e8756a"/></svg>
<svg style="left:13px;top:1153.2px;" width="25" height="25" viewBox="0 0 25 25"><rect x="5.1" y="1" width="17.8" height="17.8" fill="none" stroke="#82828f" stroke-width="2"/><path d="M1 4 V22.8 H20" fill="none" stroke="#82828f" stroke-width="1.9"/></svg>
<svg style="left:1235.5px;top:1153px;" width="23" height="23" viewBox="0 0 23 23"><rect x="5.8" y="10.2" width="16" height="11.4" fill="#82828f"/><path d="M1.4 10.2 V6.2 A4.9 4.9 0 0 1 11.2 6.2 V10.6" fill="none" stroke="#82828f" stroke-width="2.5"/></svg>
<svg style="left:1283.5px;top:1151.3px;" width="28" height="28" viewBox="0 0 28 28"><circle cx="13.8" cy="13.8" r="12.4" fill="none" stroke="#8cc078" stroke-width="2.5"/><path d="M7.4 12.8 L12 18 L19.6 6.2" fill="none" stroke="#8cc078" stroke-width="3.2"/></svg>
<svg style="left:1330.6px;top:1152.4px;" width="29" height="25" viewBox="0 0 29 25"><path d="M2.4 1.2 H26.4 Q28.6 1.4 27.6 3.2 L15.6 23 Q14.4 24.6 13.2 23 L1.2 3.2 Q0.2 1.4 2.4 1.2 Z" fill="#4a9e58"/><path d="M9.6 9 L14.2 14.6 L21 5.6" fill="none" stroke="#fff" stroke-width="3.2"/></svg>
<svg style="left:1383.2px;top:1151px;" width="20" height="29" viewBox="0 0 20 29"><path d="M1.6 1.4 Q3.4 0.6 4.2 2.4 L12.1 17.9 M18.4 6 L9.7 27.7 M6.9 11.6 L0.9 21.7" fill="none" stroke="#82828f" stroke-width="2.8"/></svg>
<svg style="left:1538.2px;top:1151px;" width="33" height="31" viewBox="0 0 33 31"><path d="M6.4 19.8 A6.7 6.7 0 0 1 6.6 6.4 A8 8 0 0 1 21.8 5.4 A6 6 0 0 1 29.4 12.2 L22 19.8 Z" fill="#82828f"/><circle cx="24.6" cy="22.8" r="9.6" fill="#e9e9e9"/><path d="M23.04 18.16 L23.29 15.92 L25.91 15.92 L26.16 18.16 L27.84 19.12 L29.90 18.23 L31.21 20.50 L29.40 21.83 L29.40 23.77 L31.21 25.10 L29.90 27.37 L27.84 26.48 L26.16 27.44 L25.91 29.68 L23.29 29.68 L23.04 27.44 L21.36 26.48 L19.30 27.37 L17.99 25.10 L19.80 23.77 L19.80 21.83 L17.99 20.50 L19.30 18.23 L21.36 19.12 Z" fill="#82828f" stroke="#82828f" stroke-width="0.8" stroke-linejoin="round"/><circle cx="24.6" cy="22.8" r="2.5" fill="#e9e9e9"/><path d="M10.6 6.6 Q12.2 3.6 15.2 3.8 Q18.8 4.4 18.4 7.4 Q18 9.6 15.4 11.6 L14.9 13.2" fill="none" stroke="#f2f2f2" stroke-width="2.2"/><rect x="13.6" y="14.4" width="2.7" height="2.7" fill="#f2f2f2"/></svg>
</body></html>
